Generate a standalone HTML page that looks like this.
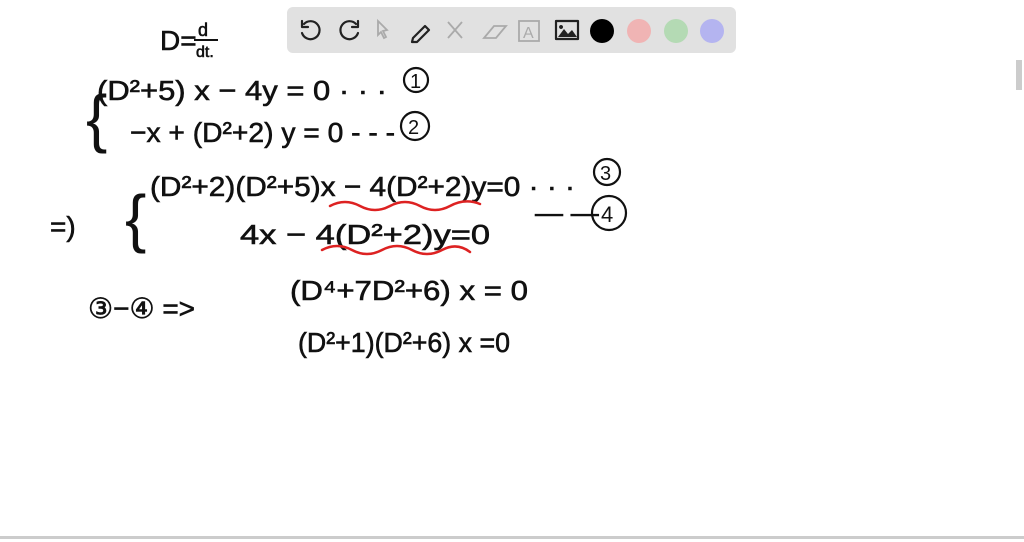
<!DOCTYPE html>
<html><head><style>
body{margin:0;width:1024px;height:542px;background:#fff;overflow:hidden;position:relative;font-family:"Liberation Sans",sans-serif}
.tb{position:absolute;left:287px;top:7px;width:449px;height:46px;background:#e1e1e1;border-radius:6px}
</style></head><body>
<div class="tb"></div>
<svg style="position:absolute;left:0;top:0" width="1024" height="542">
<g fill="none" stroke="#222" stroke-width="2.2" stroke-linecap="round" stroke-linejoin="round">
<path d="M304 24 a9 9 0 1 1 -2 9 M302 21 v6 h6"/>
<path d="M356 24 a9 9 0 1 0 2 9 M358 21 v6 h-6"/>
<path d="M413 38 l12-12 4 4 -12 12 h-5 z"/>
<rect x="556" y="21" width="22" height="18"/>
</g>
<path d="M558 37 l6-8 4 5 4-4 5 7z M561 25 a2 2 0 1 0 0.1 0" fill="#222"/>
<g fill="none" stroke="#aaa" stroke-width="1.8">
<path d="M378 21 l9 9 -4 1 3 6 -2 1 -3-6 -3 3z"/>
<path d="M448 22 l14 16 M462 22 l-14 16"/>
<path d="M484 38 l10-12 h12 l-10 12z"/>
<rect x="519" y="21" width="20" height="20"/>
</g>
<text x="523" y="38" font-size="16" fill="#aaa">A</text>
<circle cx="602" cy="31" r="12" fill="#000"/>
<circle cx="639" cy="31" r="12" fill="#f0b4b4"/>
<circle cx="676" cy="31" r="12" fill="#b4dab4"/>
<circle cx="712" cy="31" r="12" fill="#b4b4f0"/>
<rect x="1016" y="60" width="6" height="30" fill="#ccc"/>
<rect x="0" y="536" width="1024" height="3" fill="#ccc"/>
<g font-family="Liberation Sans" fill="#111" font-size="28" stroke="#111" stroke-width="0.6">
<text x="160" y="50">D=</text>
<text x="198" y="36" font-size="18">d</text>
<line x1="194" y1="40" x2="218" y2="40" stroke="#111" stroke-width="2"/>
<text x="196" y="57" font-size="16">dt.</text>
<text x="97" y="100" textLength="290" lengthAdjust="spacingAndGlyphs">(D²+5) x − 4y =  0    · · ·</text>
<text x="130" y="142" textLength="265" lengthAdjust="spacingAndGlyphs">−x + (D²+2) y = 0 - - -</text>
<text x="86" y="140" font-size="64" stroke-width="0">{</text>
<text x="150" y="196" textLength="425" lengthAdjust="spacingAndGlyphs">(D²+2)(D²+5)x − 4(D²+2)y=0     · · ·</text>
<text x="240" y="244" textLength="250" lengthAdjust="spacingAndGlyphs">4x  −  4(D²+2)y=0</text>
<text x="535" y="222">— —</text>
<text x="50" y="236">=)</text>
<text x="125" y="240" font-size="64" stroke-width="0">{</text>
<text x="88" y="318">③−④    =&gt;</text>
<text x="290" y="300" textLength="238" lengthAdjust="spacingAndGlyphs">(D⁴+7D²+6) x = 0</text>
<text x="298" y="352" textLength="212" lengthAdjust="spacingAndGlyphs">(D²+1)(D²+6) x =0</text>
</g>
<g fill="none" stroke="#111" stroke-width="2.2">
<circle cx="416" cy="80" r="12"/><text x="410" y="88" font-size="20" fill="#111" stroke="none">1</text>
<circle cx="415" cy="126" r="14"/><text x="408" y="134" font-size="20" fill="#111" stroke="none">2</text>
<circle cx="607" cy="172" r="13"/><text x="600" y="180" font-size="20" fill="#111" stroke="none">3</text>
<circle cx="609" cy="213" r="17"/><text x="601" y="222" font-size="22" fill="#111" stroke="none">4</text>
</g>
<g fill="none" stroke="#d22" stroke-width="2.5" stroke-linecap="round">
<path d="M330 206 q15-8 30 0 t30 0 t30 0 t30 0 t30-2"/>
<path d="M322 250 q15-8 30 0 t30 0 t30 0 t30 0 t28 2"/>
</g>
</svg>
</body></html>
